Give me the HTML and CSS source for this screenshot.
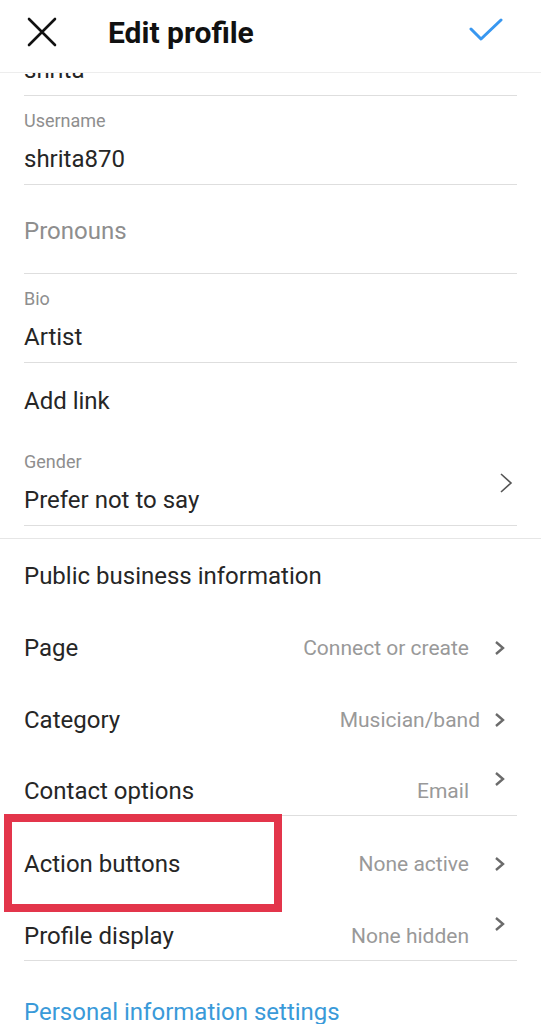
FILE: index.html
```html
<!DOCTYPE html>
<html lang="en">
<head>
<meta charset="UTF-8">
<meta name="viewport" content="width=device-width, initial-scale=1.0">
<title>Edit profile</title>
<link rel="stylesheet" href="styles.css">
</head>

<body>
    <div class="screen">
        <header class="topbar">
            <svg class="icon-close" width="32" height="32" viewBox="0 0 32 32">
                <path d="M3 3 L29 29 M29 3 L3 29" stroke="#111" stroke-width="2.6" stroke-linecap="round" fill="none"/>
            </svg>
            <h1>Edit profile</h1>
            <svg class="icon-check" width="34" height="26" viewBox="0 0 34 26">
                <path d="M2 12 L12 22 L32 3" stroke="#3897f0" stroke-width="3" stroke-linecap="round" stroke-linejoin="round" fill="none"/>
            </svg>
        </header>

        <div class="content">
            <div class="field first">
                <div class="label">Name</div>
                <div class="value">shrita</div>
            </div>
            <div class="field">
                <div class="label">Username</div>
                <div class="value">shrita870</div>
            </div>
            <div class="field single">
                <div class="value placeholder">Pronouns</div>
            </div>
            <div class="field">
                <div class="label">Bio</div>
                <div class="value">Artist</div>
            </div>
            <div class="field link-row">
                <div class="value">Add link</div>
            </div>
            <div class="field gender">
                <div class="field-text">
                    <div class="label">Gender</div>
                    <div class="value">Prefer not to say</div>
                </div>
                <svg class="chev-thin" width="14" height="22" viewBox="0 0 14 22">
                    <path d="M2 2 L12 11 L2 20" stroke="#555" stroke-width="1.6" fill="none"/>
                </svg>
            </div>

            <section class="business">
                <div class="row heading">Public business information</div>
                <div class="row">
                    <span class="row-name">Page</span>
                    <span class="row-value">Connect or create</span>
                    <svg class="chev" width="11" height="16" viewBox="0 0 11 16"><path d="M2 2 L9 8 L2 14"/></svg>
                </div>
                <div class="row">
                    <span class="row-name">Category</span>
                    <span class="row-value tight">Musician/band</span>
                    <svg class="chev" width="11" height="16" viewBox="0 0 11 16"><path d="M2 2 L9 8 L2 14"/></svg>
                </div>
                <div class="row contact lined">
                    <span class="row-name">Contact options</span>
                    <span class="row-value">Email</span>
                    <svg class="chev raised" width="11" height="16" viewBox="0 0 11 16"><path d="M2 2 L9 8 L2 14"/></svg>
                </div>
                <div class="row action">
                    <span class="row-name">Action buttons</span>
                    <span class="row-value">None active</span>
                    <svg class="chev" width="11" height="16" viewBox="0 0 11 16"><path d="M2 2 L9 8 L2 14"/></svg>
                    <div class="highlight"></div>
                </div>
                <div class="row display lined">
                    <span class="row-name">Profile display</span>
                    <span class="row-value">None hidden</span>
                    <svg class="chev raised" width="11" height="16" viewBox="0 0 11 16"><path d="M2 2 L9 8 L2 14"/></svg>
                </div>
                <div class="row personal">Personal information settings</div>
            </section>
        </div>
    </div>
</body>

</html>
```

FILE: styles.css
```css
body {
    margin: 0;
    font-family: Roboto, "Noto Sans", Arial, sans-serif;
    background: #fff;
    color: #262626;
}

.screen {
    width: 541px;
    height: 1024px;
    overflow: hidden;
    display: flex;
    flex-direction: column;
}

.topbar {
    height: 64px;
    flex-shrink: 0;
    display: flex;
    align-items: center;
    padding: 0 38px 8px 26px;
    border-bottom: 1px solid #ededed;
}

.topbar h1 {
    margin: 0 0 0 50px;
    font-size: 30px;
    font-weight: 700;
    color: #111;
    flex: 1;
}

.icon-check {
    margin-bottom: 5px;
}

.content {
    flex: 1;
    overflow: hidden;
}

.field {
    margin: 0 24px;
    padding: 14px 0 10px;
    border-bottom: 1px solid #dedede;
}

.field.first {
    margin-top: -66px;
}

.label {
    font-size: 18px;
    line-height: 22px;
    color: #8e8e8e;
}

.value {
    margin-top: 12px;
    font-size: 24px;
    line-height: 30px;
}

.field.single {
    padding: 31px 0 27px;
}

.field.single .value,
.field.link-row .value {
    margin-top: 0;
}

.placeholder {
    color: #8e8e8e;
}

.field.link-row {
    padding: 23px 0 21px;
    border-bottom: none;
}

.field.gender {
    display: flex;
    align-items: center;
    justify-content: space-between;
    margin-bottom: 12px;
}

.chev-thin {
    margin-right: 4px;
}

.business {
    border-top: 1px solid #e6e6e6;
}

.row {
    position: relative;
    display: flex;
    align-items: center;
    margin: 0 24px;
    padding: 21px 12px 21px 0;
    font-size: 24px;
    line-height: 30px;
}

.row.heading {
    padding: 22px 0 21px;
}

.row-name {
    flex: 1;
}

.row-value {
    font-size: 21px;
    color: #999;
    margin-right: 25px;
}

.row-value.tight {
    margin-right: 14px;
}

.chev path {
    stroke: #6b6b6b;
    stroke-width: 2.4;
    fill: none;
}

.chev.raised {
    align-self: flex-start;
    margin-top: -5px;
}

.row.lined {
    border-bottom: 1px solid #dedede;
}

.row.contact {
    padding-top: 20px;
    padding-bottom: 9px;
}

.row.action {
    padding-top: 33px;
}

.row.display {
    padding-top: 21px;
    padding-bottom: 9px;
}

.row.personal {
    padding-top: 36px;
    color: #3a9ad9;
}

.highlight {
    position: absolute;
    left: -20px;
    top: -2px;
    width: 262px;
    height: 82px;
    border: 8px solid #e3354b;
}
```
